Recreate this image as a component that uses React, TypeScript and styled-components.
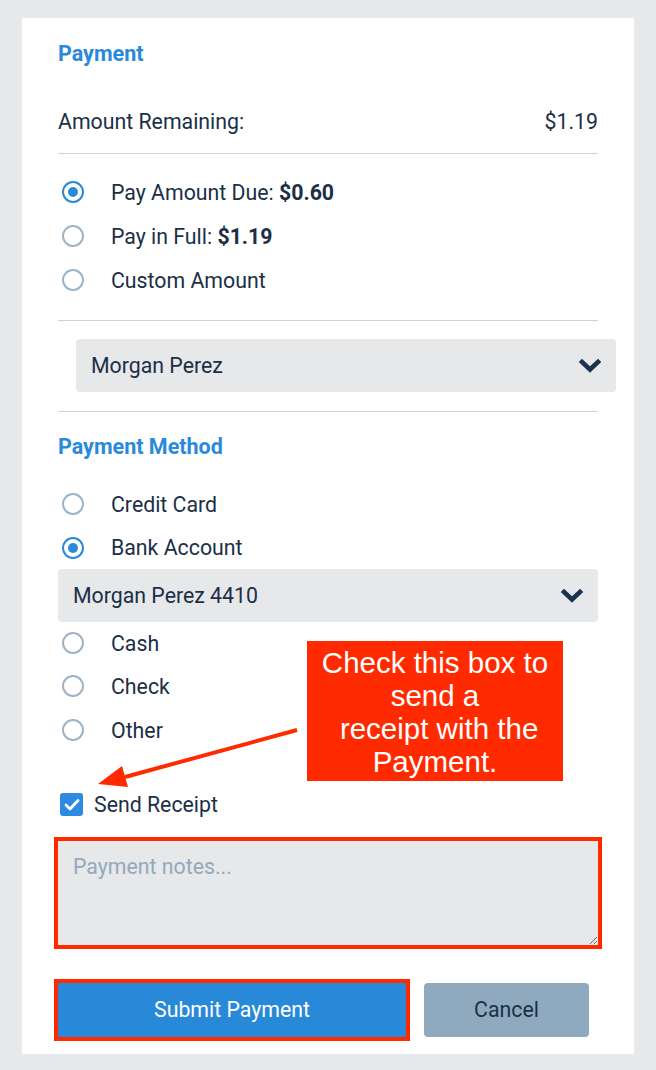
import React from "react";
import styled, { createGlobalStyle } from "styled-components";

const GlobalStyle = createGlobalStyle`
  html, body {
    margin: 0;
    background: #e6e8ea;
    font-family: Roboto, "Liberation Sans", sans-serif;
    color: #1b2f47;
  }
`;

const Page = styled.div`
  padding: 18px 22px 14px;
`;

const Card = styled.div`
  position: relative;
  width: 612px;
  box-sizing: border-box;
  background: #fff;
  padding: 24px 36px 17px;
`;

const Heading = styled.h3<{ $gap: number }>`
  margin: 0 0 ${(p) => p.$gap}px;
  font-size: 21.5px;
  line-height: 24px;
  font-weight: 700;
  color: #2a89db;
`;

const SummaryRow = styled.div`
  display: flex;
  justify-content: space-between;
  font-size: 21.3px;
  line-height: 24px;
  padding-bottom: 19px;
  border-bottom: 1px solid #c8d3dd;
`;

const Group = styled.div<{ $pad: string; $divider?: boolean }>`
  padding: ${(p) => p.$pad};
  border-bottom: ${(p) => (p.$divider ? "1px solid #c8d3dd" : "none")};
`;

const RadioRow = styled.label<{ $h?: number }>`
  display: flex;
  align-items: center;
  height: ${(p) => p.$h || 44}px;
  font-size: 21.3px;
  gap: 27px;
  padding-left: 4px;
  b {
    font-weight: 700;
  }
`;

const RadioDot = styled.span<{ $on?: boolean }>`
  width: 22px;
  height: 22px;
  box-sizing: border-box;
  border-radius: 50%;
  border: 2px solid ${(p) => (p.$on ? "#2a89db" : "#9db3c7")};
  display: flex;
  align-items: center;
  justify-content: center;
  flex-shrink: 0;
  &::after {
    content: "";
    width: 10px;
    height: 10px;
    border-radius: 50%;
    background: ${(p) => (p.$on ? "#2a89db" : "transparent")};
  }
`;

const Select = styled.div<{ $indent?: number }>`
  display: flex;
  align-items: center;
  justify-content: space-between;
  height: 53px;
  box-sizing: border-box;
  margin-left: ${(p) => p.$indent || 0}px;
  margin-right: ${(p) => -(p.$indent || 0)}px;
  padding: 0 15px 0 15px;
  background: #e6e8ea;
  border-radius: 4px;
  font-size: 21.3px;
`;

const CheckRow = styled.label`
  display: flex;
  align-items: center;
  gap: 11px;
  height: 30px;
  margin: 37px 0 22px 2px;
  font-size: 21.3px;
`;

const CheckBox = styled.span`
  width: 23px;
  height: 23px;
  border-radius: 3px;
  background: #2d8ae0;
  display: flex;
  align-items: center;
  justify-content: center;
`;

const Notes = styled.textarea`
  display: block;
  width: 100%;
  height: 104px;
  box-sizing: border-box;
  border: none;
  outline: 4px solid #ff2a00;
  background: #e6e8ea;
  padding: 13px 15px 12px;
  font-family: Roboto, sans-serif;
  font-size: 21.3px;
  color: #1b2f47;
  resize: vertical;
  &::placeholder {
    color: #94a9bc;
  }
`;

const Actions = styled.div`
  display: flex;
  gap: 18px;
  margin-top: 38px;
`;

const Button = styled.button<{ $primary?: boolean; $w: number }>`
  width: ${(p) => p.$w}px;
  height: 54px;
  padding: 0 0 2px;
  border: none;
  border-radius: ${(p) => (p.$primary ? 0 : 4)}px;
  font-family: Roboto, sans-serif;
  font-size: 21.3px;
  background: ${(p) => (p.$primary ? "#2889d9" : "#8faabf")};
  color: ${(p) => (p.$primary ? "#fff" : "#1b2f47")};
  outline: ${(p) => (p.$primary ? "4px solid #ff2a00" : "none")};
`;

const Callout = styled.div`
  position: absolute;
  left: 285px;
  top: 623px;
  width: 256px;
  height: 140px;
  box-sizing: border-box;
  padding-top: 5px;
  background: #ff2a00;
  color: #fff;
  font-family: "Liberation Sans", Arial, sans-serif;
  font-size: 29.5px;
  line-height: 33px;
  text-align: center;
  white-space: nowrap;
`;

const Arrow = styled.svg`
  position: absolute;
  left: 0;
  top: 0;
  pointer-events: none;
`;

const Chevron = () => (
  <svg width="22" height="14" viewBox="0 0 22 14">
    <path d="M3 3l8 7.5L19 3" fill="none" stroke="#1b3250" strokeWidth="4.6" strokeLinecap="square" strokeLinejoin="miter" />
  </svg>
);

const Radio = ({ on, h, children }: { on?: boolean; h?: number; children: React.ReactNode }) => (
  <RadioRow $h={h}>
    <RadioDot $on={on} />
    <span>{children}</span>
  </RadioRow>
);

export default function App() {
  return (
    <>
      <GlobalStyle />
      <Page>
        <Card>
          <Heading $gap={44}>Payment</Heading>
          <SummaryRow>
            <span>Amount Remaining:</span>
            <span>$1.19</span>
          </SummaryRow>

          <Group $pad="16px 0 18px" $divider>
            <Radio on>
              Pay Amount Due: <b>$0.60</b>
            </Radio>
            <Radio>
              Pay in Full: <b>$1.19</b>
            </Radio>
            <Radio>Custom Amount</Radio>
          </Group>

          <Group $pad="18px 0 19px" $divider>
            <Select $indent={18}>
              <span>Morgan Perez</span>
              <Chevron />
            </Select>
          </Group>

          <Group $pad="23px 0 0">
            <Heading $gap={23}>Payment Method</Heading>
            <Radio>Credit Card</Radio>
            <Radio on h={43}>Bank Account</Radio>
            <Select>
              <span>Morgan Perez 4410</span>
              <Chevron />
            </Select>
            <Radio h={42}>Cash</Radio>
            <Radio h={44}>Check</Radio>
            <Radio h={44}>Other</Radio>
          </Group>

          <CheckRow>
            <CheckBox>
              <svg width="16" height="13" viewBox="0 0 16 13">
                <path d="M2 7l4 4L14 2.5" fill="none" stroke="#fff" strokeWidth="2.8" strokeLinecap="round" strokeLinejoin="round" />
              </svg>
            </CheckBox>
            <span>Send Receipt</span>
          </CheckRow>

          <Notes placeholder="Payment notes..." />

          <Actions>
            <Button $primary $w={348}>Submit Payment</Button>
            <Button $w={165}>Cancel</Button>
          </Actions>

          <Callout>
            Check this box to
            <br />
            send a
            <br />
            &nbsp;receipt with the
            <br />
            Payment.
          </Callout>

          <Arrow width="612" height="1038" viewBox="0 0 612 1038">
            <line x1="275" y1="712" x2="103" y2="759" stroke="#ff2a00" strokeWidth="4" />
            <polygon points="76,766 100,748 106,769" fill="#ff2a00" />
          </Arrow>
        </Card>
      </Page>
    </>
  );
}
